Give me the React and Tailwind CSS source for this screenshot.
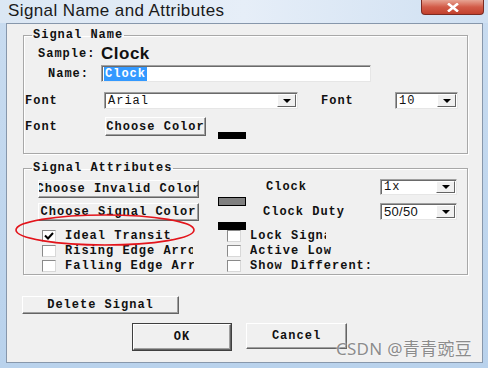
import React from "react";

const mono = "font-['Liberation_Mono','Courier_New',monospace] font-bold text-[12px] tracking-[1px] leading-[14px] text-[#111]";

function Btn({ className = "", children }) {
  return (
    <div
      className={`flex items-center justify-center overflow-hidden whitespace-nowrap bg-[#f0f0f0] border border-t-white border-l-white border-r-[#646464] border-b-[#646464] shadow-[inset_-1px_-1px_0_#a0a0a0] ${className}`}
    >
      {children}
    </div>
  );
}

function Combo({ value, sans, className = "" }) {
  return (
    <div
      className={`flex bg-white border border-[#a0a0a0] border-r-[#e6e6e6] border-b-[#e6e6e6] shadow-[inset_1px_1px_0_#6a6a6a] ${className}`}
    >
      <div
        className={`flex-1 pl-[3px] flex items-center whitespace-nowrap overflow-hidden font-normal ${
          sans ? "font-['Liberation_Sans',Arial,sans-serif] text-[13px] tracking-[0.3px]" : ""
        }`}
      >
        {value}
      </div>
      <div className="w-[19px] my-[1px] mr-[1px] flex items-center justify-center bg-[#f0f0f0] border border-t-white border-l-white border-r-[#646464] border-b-[#646464]">
        <svg width="8" height="4" viewBox="0 0 8 4">
          <path d="M0 0H8L4 4Z" fill="#000" />
        </svg>
      </div>
    </div>
  );
}

function Check({ checked, label, labelW }) {
  return (
    <div className="flex items-center">
      <div className="relative w-[14px] h-[12px] bg-white border border-[#8a8a8a] border-r-[#d8d8d8] border-b-[#d8d8d8] flex items-center justify-center">
        {checked && (
          <svg width="10" height="8" viewBox="0 0 10 8">
            <path d="M1 3.5L4 6.5L9 1" fill="none" stroke="#000" strokeWidth="2" />
          </svg>
        )}
      </div>
      <div className="ml-[9px] overflow-hidden whitespace-nowrap" style={labelW ? { width: labelW } : undefined}>
        {label}
      </div>
    </div>
  );
}

export default function App() {
  return (
    <div className={`relative w-[488px] h-[368px] overflow-hidden bg-gradient-to-b from-[#c9dcf0] to-[#b9d2ec] ${mono}`}>
      {/* title bar */}
      <div className="h-[23px] flex justify-between bg-gradient-to-r from-[#dbe7f4] via-[#e6eef8] to-[#cfe0f2]">
        <div className="pl-[8px] pt-[1px] font-['Liberation_Sans',Arial,sans-serif] font-normal tracking-[0.4px] text-[17px] leading-[20px] text-[#1a1a1a]">
          Signal Name and Attributes
        </div>
        <div className="mr-[4px] w-[63px] h-[15px] rounded-b-[4px] border border-t-0 border-[#7b2b22] bg-gradient-to-b from-[#e6a393] via-[#d25b48] to-[#c2402d] flex items-center justify-center">
          <svg width="14" height="9" viewBox="0 0 14 9">
            <path d="M2 0.5L12 8.5M12 0.5L2 8.5" stroke="#fff" strokeWidth="2.6" />
          </svg>
        </div>
      </div>

      {/* client area */}
      <div className="ml-[6px] w-[477px] h-[340px] border border-[#8797ab] bg-[#f0f0f0]">
        {/* Signal Name group */}
        <fieldset className="ml-[16px] mt-[4px] w-[445px] pb-[17px] border border-[#a8a8a8] shadow-[1px_1px_0_#fff,inset_1px_1px_0_#fff]">
          <legend className="ml-[8px] px-[1px]">Signal Name</legend>
          <div className="flex items-center h-[14px] mt-[5px]">
            <div className="ml-[14px] w-[63px]">Sample:</div>
            <div className="font-['Liberation_Sans',Arial,sans-serif] text-[17px] tracking-[0.5px] font-bold">Clock</div>
          </div>
          <div className="flex items-center h-[17px] mt-[4px]">
            <div className="ml-[24px] w-[53px]">Name:</div>
            <div className="w-[270px] h-[17px] flex items-center pl-[2px] bg-white border border-[#a0a0a0] border-r-[#e6e6e6] border-b-[#e6e6e6] shadow-[inset_1px_1px_0_#6a6a6a]">
              <span className="bg-[#3399ff] text-white px-[1px]">Clock</span>
            </div>
          </div>
          <div className="flex items-center h-[17px] mt-[10px]">
            <div className="ml-[1px] w-[79px]">Font</div>
            <Combo value="Arial" className="w-[194px] h-[17px]" />
            <div className="ml-[23px] w-[74px]">Font</div>
            <Combo value="10" className="w-[63px] h-[17px]" />
          </div>
          <div className="flex items-center h-[19px] mt-[8px]">
            <div className="ml-[1px] w-[80px]">Font</div>
            <Btn className="w-[101px] h-[19px]">Choose Color</Btn>
            <div className="ml-[12px] w-[28px] h-[7px] bg-black self-end mb-[-3px]" />
          </div>
        </fieldset>

        {/* Signal Attributes group */}
        <fieldset className="ml-[16px] mt-[7px] w-[445px] pb-[1px] border border-[#a8a8a8] shadow-[1px_1px_0_#fff,inset_1px_1px_0_#fff]">
          <legend className="ml-[8px] px-[1px]">Signal Attributes</legend>
          <div className="flex">
            <div className="ml-[14px] mt-[5px] flex flex-col gap-[5px]">
              <Btn className="w-[161px] h-[18px]">Choose Invalid Color</Btn>
              <Btn className="w-[161px] h-[18px]">Choose Signal Color</Btn>
            </div>
            <div className="ml-[19px] flex flex-col">
              <div className="mt-[22px] w-[28px] h-[9px] bg-[#808080] border border-black" />
              <div className="mt-[16px] w-[28px] h-[8px] bg-black" />
            </div>
            <div className="ml-[17px] mt-[4px] flex flex-col gap-[8px]">
              <div className="flex items-center h-[16px]">
                <div className="ml-[3px] w-[114px]">Clock</div>
                <Combo value="1x" className="w-[77px] h-[16px]" />
              </div>
              <div className="flex items-center h-[17px]">
                <div className="w-[117px]">Clock Duty</div>
                <Combo value="50/50" sans className="w-[77px] h-[17px]" />
              </div>
            </div>
          </div>
          <div className="flex -mt-[2px]">
            <div className="ml-[18px] w-[185px] flex flex-col">
              <div className="h-[15px] flex items-center"><Check checked label="Ideal Transition" labelW={107} /></div>
              <div className="h-[15px] flex items-center"><Check label="Rising Edge Arrows" labelW={128} /></div>
              <div className="h-[15px] flex items-center"><Check label="Falling Edge Arrows" labelW={129} /></div>
            </div>
            <div className="flex flex-col">
              <div className="h-[15px] flex items-center"><Check label="Lock Signal" labelW={76} /></div>
              <div className="h-[15px] flex items-center"><Check label="Active Low" /></div>
              <div className="h-[15px] flex items-center"><Check label="Show Different:" /></div>
            </div>
          </div>
        </fieldset>

        <Btn className="ml-[15px] mt-[21px] w-[157px] h-[18px]">Delete Signal</Btn>

        <div className="flex mt-[9px]">
          <div className="ml-[125px] w-[100px] h-[28px] border border-[#3f3f3f] flex">
            <Btn className="flex-1">OK</Btn>
          </div>
          <Btn className="ml-[14px] w-[101px] h-[26px]">Cancel</Btn>
        </div>
      </div>

      {/* annotation + watermark overlays */}
      <svg className="absolute left-0 top-0 pointer-events-none" width="488" height="368">
        <ellipse cx="105" cy="230" rx="89" ry="15" fill="none" stroke="#e3141b" strokeWidth="1.6" />
      </svg>
      <div className="absolute right-[16px] bottom-[9px] font-['Noto_Sans','Noto_Sans_CJK_SC',sans-serif] font-normal tracking-[0.3px] text-[17px] leading-[20px] text-[#8c8c8c] [text-shadow:0_0_2px_#fff]">
        CSDN @青青豌豆
      </div>
    </div>
  );
}
